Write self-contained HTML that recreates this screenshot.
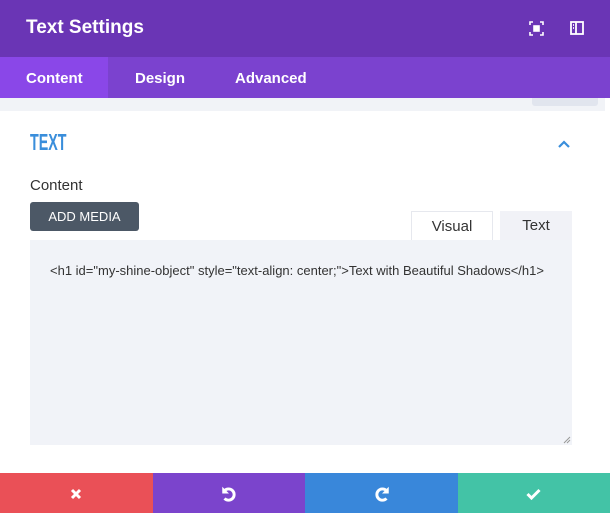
<!DOCTYPE html>
<html><head><style>
*{margin:0;padding:0;box-sizing:border-box}
body{width:610px;height:513px;overflow:hidden;background:#fff;font-family:"Liberation Sans",sans-serif;position:relative}
.a{position:absolute}
</style></head><body>
<div class="a" style="left:0;top:0;width:610px;height:57px;background:#6a35b5"></div>
<div class="a" style="left:26px;top:17px;color:#fff;font-size:19px;font-weight:bold">Text Settings</div>
<svg class="a" style="left:529px;top:21px" width="15" height="15" viewBox="0 0 15 15" fill="none" stroke="#fff" stroke-width="1.6"><path d="M1 4V1h3M11 1h3v3M14 11v3h-3M4 14H1v-3"/><rect x="5" y="5" width="5" height="5" fill="#fff"/></svg>
<svg class="a" style="left:570px;top:21px" width="14" height="14" viewBox="0 0 14 14" fill="none" stroke="#fff" stroke-width="1.8"><rect x="1" y="1" width="12" height="12"/><path d="M6 1v12M3 4h1M3 7h1"/></svg>
<div class="a" style="left:0;top:57px;width:610px;height:41px;background:#7b42cf"></div>
<div class="a" style="left:0;top:57px;width:108px;height:41px;background:#8a47e8"></div>
<div class="a" style="left:26px;top:70px;color:#fff;font-size:15px;font-weight:bold">Content</div>
<div class="a" style="left:135px;top:70px;color:#fff;font-size:15px;font-weight:bold">Design</div>
<div class="a" style="left:235px;top:70px;color:#fff;font-size:15px;font-weight:bold">Advanced</div>
<div class="a" style="left:0;top:98px;width:605px;height:13px;background:#f1f3f7"></div>
<div class="a" style="left:532px;top:98px;width:66px;height:8px;background:#e1e5ee;border-radius:0 0 3px 3px"></div>
<div class="a" style="left:30px;top:129px;color:#3a8edb;font-size:23px;font-weight:bold;transform:scaleX(.62);transform-origin:left">TEXT</div>
<svg class="a" style="left:558px;top:140px" width="12" height="8" viewBox="0 0 12 8" fill="none" stroke="#3a8edb" stroke-width="2.2"><path d="M1 7l5-5 5 5"/></svg>
<div class="a" style="left:30px;top:177px;color:#333;font-size:15px">Content</div>
<div class="a" style="left:30px;top:202px;width:109px;height:29px;background:#4c5866;border-radius:3px;color:#fff;font-size:13px;text-align:center;line-height:29px">ADD MEDIA</div>
<div class="a" style="left:411px;top:211px;width:82px;height:30px;background:#fff;border:1px solid #e6e8ee;border-bottom:none;color:#333;font-size:15px;text-align:center;line-height:30px">Visual</div>
<div class="a" style="left:500px;top:211px;width:72px;height:30px;background:#f1f2f7;color:#333;font-size:15px;text-align:center;line-height:30px">Text</div>
<div class="a" style="left:30px;top:240px;width:542px;height:205px;background:#f1f3f8"></div>
<div class="a" style="left:50px;top:263px;color:#333;font-size:13px;white-space:nowrap">&lt;h1 id="my-shine-object" style="text-align: center;"&gt;Text with Beautiful Shadows&lt;/h1&gt;</div>
<svg class="a" style="left:563px;top:436px" width="8" height="8" stroke="#999"><path d="M1 7L7 1M4 7L7 4"/></svg>
<div class="a" style="left:0;top:473px;width:153px;height:40px;background:#ea5057"></div>
<div class="a" style="left:153px;top:473px;width:152px;height:40px;background:#7b44cc"></div>
<div class="a" style="left:305px;top:473px;width:153px;height:40px;background:#3987da"></div>
<div class="a" style="left:458px;top:473px;width:152px;height:40px;background:#43c3a6"></div>
<svg class="a" style="left:70px;top:488px" width="12" height="12" stroke="#fff" stroke-width="3"><path d="M2 2l8 8M10 2l-8 8"/></svg>
<svg class="a" style="left:220px;top:485px" width="18" height="18" viewBox="0 0 16 16" fill="none" stroke="#fff" stroke-width="2.6"><path d="M4 5a5 5 0 1 1 0 7"/><path d="M2 1.5v6h6z" fill="#fff" stroke="none"/></svg>
<svg class="a" style="left:373px;top:485px" width="18" height="18" viewBox="0 0 16 16" fill="none" stroke="#fff" stroke-width="2.6"><path d="M12 5a5 5 0 1 0 0 7"/><path d="M14 1.5v6h-6z" fill="#fff" stroke="none"/></svg>
<svg class="a" style="left:526px;top:488px" width="15" height="12" fill="none" stroke="#fff" stroke-width="3"><path d="M1.5 6l4 4 8-8"/></svg>
</body></html>
